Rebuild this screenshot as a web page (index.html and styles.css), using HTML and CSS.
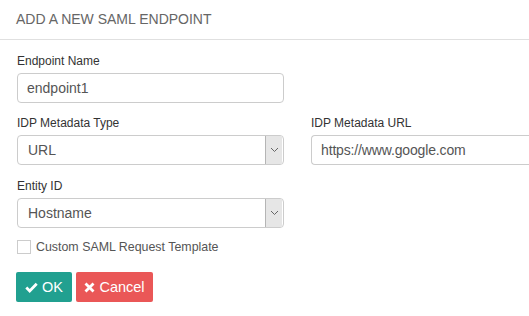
FILE: index.html
```html
<!DOCTYPE html>
<html>
<head>
    <title>Add a new SAML endpoint</title>
    <link rel="stylesheet" href="styles.css">
</head>
<body>
    <div class="panel">
        <div class="panel-header">Add a new SAML endpoint</div>
        <form class="panel-body">
            <div class="fila">
                <div class="campo">
                    <label>Endpoint Name</label>
                    <input class="control" type="text" value="endpoint1">
                </div>
            </div>
            <div class="fila fila-media">
                <div class="campo">
                    <label>IDP Metadata Type</label>
                    <div class="select">
                        <span>URL</span>
                        <span class="flecha">
                            <svg width="9" height="6" viewBox="0 0 9 6"><path d="M1 1l3.5 3.5L8 1" fill="none" stroke="#666" stroke-width="1"/></svg>
                        </span>
                    </div>
                </div>
                <div class="campo campo-ancho">
                    <label>IDP Metadata URL</label>
                    <input class="control" type="text" value="https://www.google.com">
                </div>
            </div>
            <div class="fila">
                <div class="campo">
                    <label>Entity ID</label>
                    <div class="select">
                        <span>Hostname</span>
                        <span class="flecha">
                            <svg width="9" height="6" viewBox="0 0 9 6"><path d="M1 1l3.5 3.5L8 1" fill="none" stroke="#666" stroke-width="1"/></svg>
                        </span>
                    </div>
                </div>
            </div>
            <label class="check">
                <span class="caja"></span>
                Custom SAML Request Template
            </label>
            <div class="botones">
                <button type="button" class="btn btn-ok">
                    <svg width="13" height="11" viewBox="0 0 13 11"><path d="M1.3 5.6l3.4 3.4L11.7 1.8" fill="none" stroke="#fff" stroke-width="2.8"/></svg>
                    OK
                </button>
                <button type="button" class="btn btn-cancel">
                    <svg width="11" height="11" viewBox="0 0 11 11"><path d="M1.5 1.5l8 8M9.5 1.5l-8 8" fill="none" stroke="#fff" stroke-width="2.8"/></svg>
                    Cancel
                </button>
            </div>
        </form>
    </div>
</body>
</html>
```

FILE: styles.css
```css
body {
    margin: 0;
    font-family: "Liberation Sans", Arial, sans-serif;
    background-color: #fff;
    color: #333;
    overflow: hidden;
}

.panel {
    width: 529px;
}

.panel-header {
    padding: 12px 16px 12px;
    height: 15px;
    font-size: 14px;
    line-height: 15px;
    text-transform: uppercase;
    color: #666;
    border-bottom: 1px solid #e0e0e0;
}

.panel-body {
    padding: 14px 0 0 17px;
    margin: 0;
}

.fila {
    display: flex;
    gap: 27px;
}

.campo {
    width: 267px;
    flex-shrink: 0;
    margin-bottom: 13px;
}

.fila-media .campo {
    margin-bottom: 14px;
}

.campo-ancho {
    width: 240px;
}

.campo label {
    display: block;
    font-size: 12px;
    line-height: 14px;
    margin-bottom: 5px;
    color: #333;
}

.control {
    display: block;
    width: 100%;
    height: 30px;
    box-sizing: border-box;
    padding: 0 9px;
    border: 1px solid #ccc;
    border-radius: 4px;
    font-family: inherit;
    font-size: 14px;
    color: #555;
    background: #fff;
}

.campo-ancho .control {
    border-right: none;
    border-radius: 4px 0 0 4px;
    letter-spacing: -0.15px;
}

.select {
    display: flex;
    align-items: center;
    justify-content: space-between;
    height: 30px;
    box-sizing: border-box;
    border: 1px solid #ccc;
    border-radius: 4px;
    padding-left: 10px;
    font-size: 14px;
    color: #555;
}

.flecha {
    display: flex;
    align-items: center;
    justify-content: center;
    width: 16px;
    height: 28px;
    margin-right: 1px;
    background-color: #e6e6e6;
    border-left: 1px solid #b5b5b5;
}

.check {
    display: flex;
    align-items: center;
    gap: 5px;
    margin-top: -1px;
    font-size: 12.4px;
    color: #555;
}

.caja {
    width: 12px;
    height: 12px;
    border: 1px solid #ccc;
    background: #fff;
}

.botones {
    display: flex;
    gap: 4px;
    margin-top: 18px;
    margin-left: -1px;
}

.btn {
    display: flex;
    align-items: center;
    justify-content: center;
    gap: 4px;
    height: 30px;
    padding: 0;
    border: none;
    border-radius: 2px;
    font-family: inherit;
    font-size: 14.5px;
    color: #fff;
    cursor: pointer;
}

.btn svg {
    flex-shrink: 0;
}

.btn-ok {
    background-color: #21a090;
    width: 56px;
}

.btn-cancel {
    background-color: #ea5757;
    width: 77px;
}
```
